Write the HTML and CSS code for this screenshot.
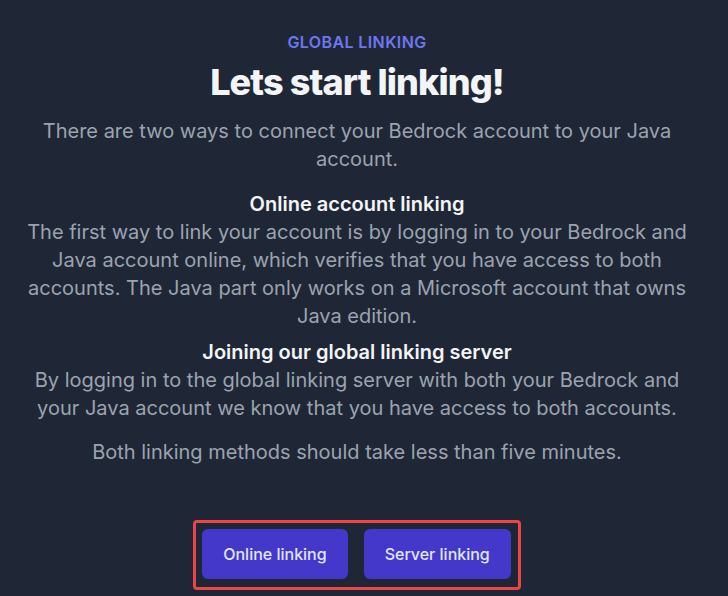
FILE: index.html
```html
<!DOCTYPE html>
<html lang="en">
<head>
<meta charset="utf-8">
<title>Global linking</title>
<link rel="stylesheet" href="styles.css">
</head>
<body>
<main class="page">
  <section class="intro">
    <p class="eyebrow">GLOBAL LINKING</p>
    <h1 class="title">Lets start linking!</h1>
    <p class="lead">There are two ways to connect your Bedrock account to your Java account.</p>
    <div class="method method-first">
      <h2 class="method-title">Online account linking</h2>
      <p class="method-text">The first way to link your account is by logging in to your Bedrock and Java account online, which verifies that you have access to both accounts. The Java part only works on a Microsoft account that owns Java edition.</p>
    </div>
    <div class="method">
      <h2 class="method-title">Joining our global linking server</h2>
      <p class="method-text">By logging in to the global linking server with both your Bedrock and your Java account we know that you have access to both accounts.</p>
    </div>
    <p class="note">Both linking methods should take less than five minutes.</p>
  </section>
  <div class="actions">
    <button class="btn" type="button">Online linking</button>
    <button class="btn" type="button">Server linking</button>
  </div>
</main>
</body>
</html>
```
FILE: styles.css
```css
html, body {
  margin: 0;
  padding: 0;
}
body {
  background: #1f2737;
  font-family: Inter, "Noto Sans", sans-serif;
  color: #9ca3af;
  height: 596px;
  overflow: hidden;
  padding-right: 14px;
}
.page {
  max-width: 672px;
  margin: 0 auto;
  padding-top: 30px;
  text-align: center;
}
.eyebrow {
  margin: 0;
  color: #6e76f2;
  font-size: 16px;
  line-height: 24px;
  font-weight: 600;
  letter-spacing: 0.025em;
}
.title {
  margin: 8px 0 0;
  color: #f3f4f6;
  font-size: 36px;
  line-height: 40px;
  font-weight: 800;
  letter-spacing: -0.025em;
}
.lead {
  margin: 15px 0 0;
  font-size: 20px;
  line-height: 28px;
}
.method {
  margin-top: 8px;
}
.method-first {
  margin-top: 17px;
}
.method-title {
  margin: 0;
  color: #f3f4f6;
  font-size: 20px;
  line-height: 28px;
  font-weight: 600;
}
.method-text {
  margin: 0;
  font-size: 20px;
  line-height: 28px;
}
.note {
  margin: 16px 0 0;
  font-size: 20px;
  line-height: 28px;
}
.actions {
  display: flex;
  justify-content: center;
  gap: 16px;
  width: max-content;
  margin: 54px auto 0;
  padding: 6px 7px 8px 6px;
  border: 3px solid #ef4444;
  border-radius: 4px;
}
.btn {
  background: #4338ca;
  color: #e0e7ff;
  border: 0;
  border-radius: 6px;
  padding: 13px 21px;
  font-family: Inter, "Noto Sans", sans-serif;
  font-size: 16px;
  line-height: 24px;
  font-weight: 500;
}
```
